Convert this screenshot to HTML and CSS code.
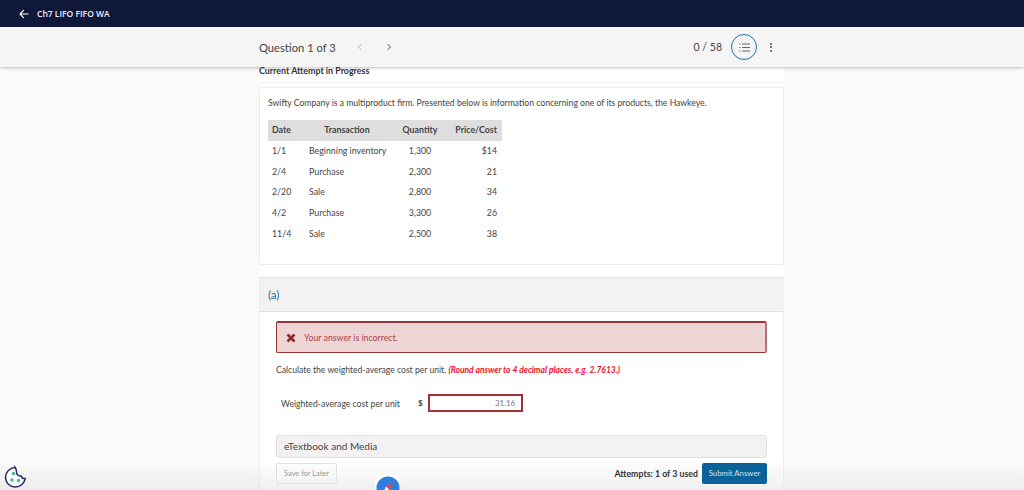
FILE: index.html
```html
<!DOCTYPE html>
<html lang="en">
<head>
<meta charset="utf-8">
<title>Ch7 LIFO FIFO WA</title>
<link rel="stylesheet" href="styles.css">
</head>
<body>
<header class="topbar">
  <svg class="back" width="10" height="10" viewBox="0 0 10 10"><path d="M9.500 5H1.200M4.800 1.200 1 5l3.800 3.800" fill="none" stroke="#fff" stroke-width="1.200"/></svg>
  <span class="course">Ch7 LIFO FIFO WA</span>
</header>
<div class="toolbar">
  <div class="toolbar-inner">
    <span class="qnum">Question 1 of 3</span>
    <svg class="chev first" width="6" height="8" viewBox="0 0 6 8"><path d="M4.500 1 1.500 4l3 3" fill="none" stroke="#b5b5b5" stroke-width="1"/></svg>
    <svg class="chev" width="6" height="8" viewBox="0 0 6 8"><path d="M1.500 1l3 3-3 3" fill="none" stroke="#555" stroke-width="1"/></svg>
    <span class="score">0 / 58</span>
    <span class="listbtn">
      <svg width="11" height="9" viewBox="0 0 11 9"><path d="M3 1h8M3 4.500h8M3 8h8" stroke="#666" stroke-width="1"/><path d="M0 1h1.500M0 4.500h1.500M0 8h1.500" stroke="#888" stroke-width="1"/></svg>
    </span>
    <span class="kebab"><i></i><i></i><i></i></span>
  </div>
</div>
<main class="column">
  <div class="attempt">Current Attempt in Progress</div>
  <section class="card">
    <p class="intro">Swifty Company is a multiproduct firm. Presented below is information concerning one of its products, the Hawkeye.</p>
    <table class="data">
      <thead>
        <tr><th class="date">Date</th><th class="tx">Transaction</th><th class="qty">Quantity</th><th class="price">Price/Cost</th></tr>
      </thead>
      <tbody>
        <tr><td>1/1</td><td class="txc">Beginning inventory</td><td class="qty">1,300</td><td class="price">$14</td></tr>
        <tr><td>2/4</td><td class="txc">Purchase</td><td class="qty">2,300</td><td class="price">21</td></tr>
        <tr><td>2/20</td><td class="txc">Sale</td><td class="qty">2,800</td><td class="price">34</td></tr>
        <tr><td>4/2</td><td class="txc">Purchase</td><td class="qty">3,300</td><td class="price">26</td></tr>
        <tr><td>11/4</td><td class="txc">Sale</td><td class="qty">2,500</td><td class="price">38</td></tr>
      </tbody>
    </table>
  </section>
  <section class="part">
    <div class="part-head">(a)</div>
    <div class="part-body">
      <div class="alert">
        <svg width="10" height="10" viewBox="0 0 10 10"><path d="M1.500 1.500l7 7M8.500 1.500l-7 7" stroke="#93282e" stroke-width="2.600"/></svg>
        <span>Your answer is incorrect.</span>
      </div>
      <p class="question">Calculate the weighted-average cost per unit. <em>(Round answer to 4 decimal places, e.g. 2.7613.)</em></p>
      <div class="answer">
        <span class="label">Weighted-average cost per unit</span>
        <span class="dollar">$</span>
        <span class="input">31.16</span>
      </div>
      <div class="media">eTextbook and Media</div>
      <div class="actions">
        <span class="save">Save for Later</span>
        <span class="attempts">Attempts: 1 of 3 used</span>
        <span class="submit">Submit Answer</span>
      </div>
    </div>
  </section>
</main>
<div class="fade"></div>
<span class="safari-tile">
  <svg width="24" height="24" viewBox="0 0 24 24"><circle cx="12" cy="12" r="11.500" fill="#2c7fe0"/><path d="M17.500 6 10 10.500l3.500 3.500z" fill="#e8453c"/><path d="M6.500 18 10 10.500l3.500 3.500z" fill="#fff"/></svg>
</span>
<svg class="cookie" width="24" height="24" viewBox="0 0 24 24">
  <path d="M11 2.500C6 2.700 1.500 7 1.500 12.300c0 5.400 4.400 9.700 9.800 9.700 5 0 9.400-3.800 9.900-8.600-1.900.4-3.700-.7-4.100-2.400-2.200.4-4.200-1-4.500-3.100-.3-2 0-4.200-1.600-5.900z" fill="#fff" stroke="#2b2a63" stroke-width="1.500"/>
  <circle cx="9.500" cy="8.500" r="1.700" fill="#35c08e"/><circle cx="8" cy="15" r="1.700" fill="#35c08e"/><circle cx="14.500" cy="15.500" r="1.700" fill="#35c08e"/>
</svg>
</body>
</html>
```
FILE: styles.css
```css
* { box-sizing: border-box; }
html, body { margin: 0; height: 490px; overflow: hidden; }
body { background: #fafafa; font-family: Lato, "Open Sans", sans-serif; color: #333; position: relative; }
.topbar { height: 27px; background: #10183a; display: flex; align-items: center; padding: 0 0 0 19px; color: #fff; }
.course { margin-left: 8px; font-size: 8.500px; font-family: "Open Sans", sans-serif; font-weight: 600; color: #eef; }
.toolbar { height: 40px; background: #f5f5f5; box-shadow: 0 1px 3px rgba(0,0,0,.25); position: relative; z-index: 1; }
.toolbar-inner { width: 525px; margin: 0 0 0 259px; height: 100%; display: flex; align-items: center; }
.qnum { font-size: 11.200px; color: #444; }
.chev.first { margin-left: 21px; }
.chev { margin-right: 23px; }
.score { margin-left: auto; font-size: 10.500px; color: #444; }
.listbtn { width: 26px; height: 26px; border-radius: 50%; border: 1px solid #1c75b5; margin-left: 9px; display: flex; align-items: center; justify-content: center; }
.kebab { display: flex; flex-direction: column; gap: 1.500px; margin: 0 12px 0 13px; }
.kebab i { width: 2px; height: 2px; background: #777; display: block; }
.column { width: 525px; margin-left: 259px; background: #fff; height: 423px; }
.attempt { position: relative; z-index: 2; font-size: 8.900px; font-weight: 700; color: #333; height: 16px; line-height: 8px; padding-top: 0; border-bottom: 1px solid #f2f2f2; }
.card { margin-top: 4px; height: 178px; border: 1px solid #ececec; border-radius: 2px; padding: 9px 8px; }
.intro { margin: 0 0 12px; font-size: 8.630px; line-height: 11px; color: #444; }
.data { border-collapse: collapse; font-size: 8.800px; color: #444; width: 234px; table-layout: fixed; }
.data th { background: #dedede; height: 21px; font-weight: 700; color: #444; padding: 0 4px 1px; line-height: 10px; }
.data td { height: 20.700px; padding: 0 4px 1px; line-height: 10px; }
.date { width: 37px; text-align: left; }
.data .tx { width: 88px; text-align: center; padding-right: 8px; }
.data .qty { text-align: center; width: 54px; }
.data .price { text-align: right; width: 55px; padding-right: 5px; }
.data .txc { text-align: left; }
.part { margin-top: 12px; height: 213px; border-top: 1px solid #e2e2e2; border-left: 1px solid #eee; border-right: 1px solid #eee; }
.part-head { height: 34px; background: #f2f2f2; border-bottom: 1px solid #e0e0e0; padding-left: 8px; font-size: 11.500px; line-height: 34px; color: #1c6ea4; }
.part-body { padding: 9px 16px 0 16px; }
.alert { height: 32px; background: #edd5d6; border: 1px solid #97343a; border-top-width: 2px; border-right: 2px solid #b97076; border-radius: 2px; display: flex; align-items: center; padding-left: 9px; font-size: 8.750px; color: #a8434a; }
.alert span { margin-left: 8px; }
.question { margin: 11px 0 0; font-size: 8.600px; line-height: 12px; color: #444; }
.question em { color: #f0102a; font-weight: 700; font-size: 8.500px; }
.answer { margin: 18px 0 0 5px; height: 18px; display: flex; align-items: center; font-size: 8.650px; color: #444; }
.label { width: 137px; }
.dollar { width: 10px; font-weight: 700; font-size: 8px; }
.input { width: 95px; height: 18px; border: 2px solid #a53038; background: #fff; font-size: 7.800px; text-align: right; line-height: 14px; padding-right: 6px; color: #777; }
.media { margin-top: 23px; height: 23px; background: #f2f2f2; border: 1px solid #e0e0e0; border-radius: 3px; padding-left: 7px; font-size: 10px; line-height: 21px; color: #444; }
.actions { margin-top: 5px; height: 21px; display: flex; align-items: center; position: relative; z-index: 4; }
.save { width: 61px; height: 21px; border: 1px solid #e2e2e2; border-radius: 2px; font-size: 7.400px; line-height: 19px; text-align: center; color: #999; }
.attempts { margin-left: auto; font-size: 8.800px; font-weight: 700; color: #333; }
.submit { margin-left: 4px; width: 65px; height: 21px; background: #0b6299; border-radius: 2px; color: #cfe0ec; font-size: 7.800px; line-height: 21px; text-align: center; }
.fade { position: absolute; z-index: 3; left: 0; right: 0; bottom: 0; height: 30px; background: linear-gradient(rgba(235,235,235,0), rgba(225,225,225,.5)); pointer-events: none; }
.safari-tile { position: absolute; z-index: 5; left: 375px; top: 475px; width: 25px; height: 25px; background: #fff; border-radius: 5px; display: flex; justify-content: center; align-items: flex-end; }
.cookie { position: absolute; z-index: 5; left: 4px; top: 465px; }
```
